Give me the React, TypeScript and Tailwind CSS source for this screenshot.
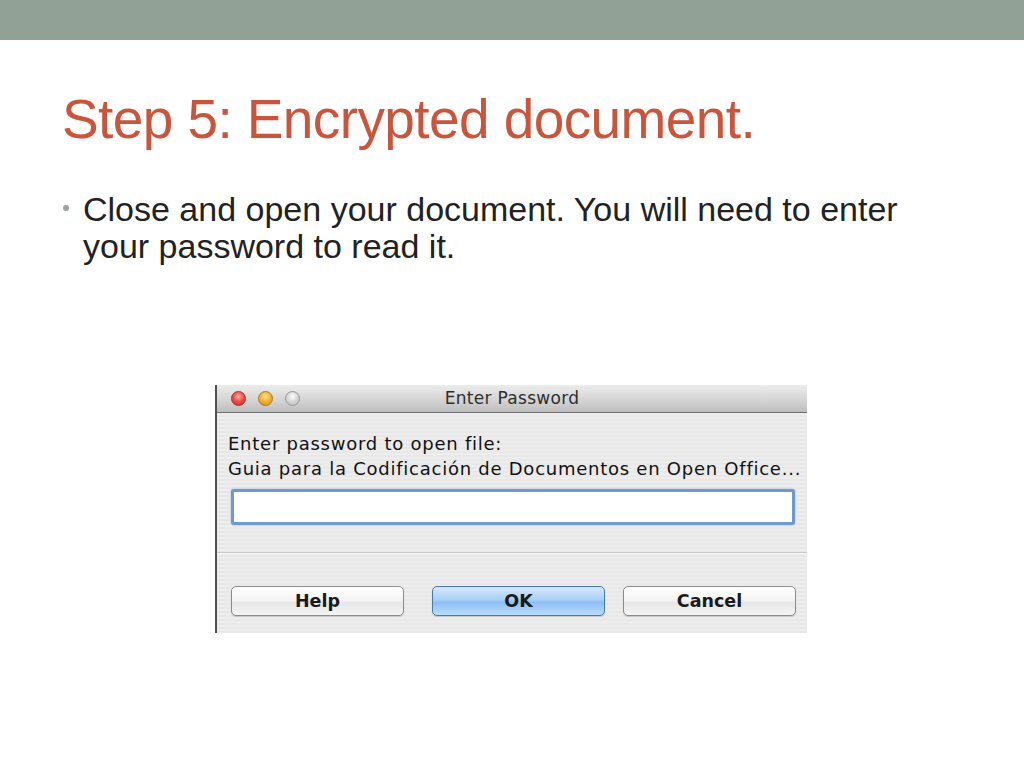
import React from 'react';

const sans = 'font-["Liberation_Sans","Arial",sans-serif]';
const ui = 'font-["DejaVu_Sans","Lucida_Grande",sans-serif]';

// Mac-style window button (close / minimise / zoom)
const Light: React.FC<{ tone: string }> = ({ tone }) => (
  <span className={`block w-[15px] h-[15px] rounded-full border ${tone}`} />
);

const DialogButton: React.FC<{ label: string; primary?: boolean; className?: string }> = ({
  label,
  primary,
  className = ''
}) => (
  <button
    className={`h-[30px] w-[173px] rounded-[5px] border text-[17.5px] font-semibold text-[#1a1a1a] flex items-center justify-center shadow-[0_1px_1px_rgba(0,0,0,0.15)] ${
      primary
        ? 'border-[#4a76b3] bg-[linear-gradient(to_bottom,#d6e9fc_0%,#a9cff7_45%,#8ebff2_55%,#b9dcfc_100%)]'
        : 'border-[#8c8c8c] bg-[linear-gradient(to_bottom,#ffffff_0%,#f3f3f3_50%,#e6e6e6_55%,#f4f4f4_100%)]'
    } ${className}`}
  >
    {label}
  </button>
);

const PasswordDialog: React.FC = () => (
  <div className={`${ui} w-[592px] h-[248px] ml-[215px] border-l-2 border-[#4f4f4f] bg-[#ececec] flex flex-col`}>
    {/* title bar */}
    <div className="relative shrink-0 h-[28px] flex items-center border-b border-[#6f6f6f] bg-[linear-gradient(to_bottom,#ececec,#d2d2d2_60%,#bdbdbd)]">
      <div className="flex items-center gap-[12px] pl-[14px]">
        <Light tone="border-[#a8302c] bg-[radial-gradient(circle_at_50%_35%,#ffb0a8_0%,#f0504a_45%,#c42a24_100%)]" />
        <Light tone="border-[#b27a14] bg-[radial-gradient(circle_at_50%_35%,#ffe2a0_0%,#f4b332_45%,#cf8c10_100%)]" />
        <Light tone="border-[#9a9a9a] bg-[radial-gradient(circle_at_50%_35%,#ffffff_0%,#d8d8d8_45%,#b4b4b4_100%)]" />
      </div>
      <span className="absolute inset-0 flex items-center justify-center text-[17px] tracking-[0.3px] text-[#2e2e2e]">
        Enter Password
      </span>
    </div>

    {/* body */}
    <div className="flex-1 flex flex-col bg-[repeating-linear-gradient(to_bottom,#ededed_0px,#ededed_2px,#e8e8e8_2px,#e8e8e8_4px)]">
      <div className="pl-[11px] pt-[18px] text-[18px] leading-[25px] text-[#111] tracking-[0.75px] whitespace-nowrap">
        <p>Enter password to open file:</p>
        <p>Guia para la Codificación de Documentos en Open Office...</p>
      </div>
      <div className="ml-[14px] mt-[8px] w-[564px] h-[36px] rounded-[3px] border-[3px] border-[#6f98cc] bg-white shadow-[0_0_2px_#8fb3e0]" />
      <div className="mt-[27px] h-[2px] border-t border-[#c9c9c9] bg-white/70" />
      <div className="flex mt-[32px] pl-[14px]">
        <DialogButton label="Help" />
        <DialogButton label="OK" primary className="ml-[28px]" />
        <DialogButton label="Cancel" className="ml-[18px]" />
      </div>
    </div>
  </div>
);

export default function App() {
  return (
    <div className="w-[1024px] h-[768px] bg-white overflow-hidden">
      <div className="h-[40px] bg-[#91a195]" />

      <h1 className={`${sans} pl-[62px] mt-[52px] text-[55px] leading-[55px] text-[#c9553d] tracking-[-0.6px]`}>
        Step 5: Encrypted document.
      </h1>

      <div className={`${sans} mt-[44px] flex text-[34px] leading-[37px] text-[#222]`}>
        <span className="w-[83px] flex justify-end pr-[14px] pt-[14px]">
          <span className="block w-[6px] h-[6px] rounded-full bg-[#9aa59e]" />
        </span>
        <p className="w-[840px]">
          Close and open your document. You will need to enter your password to read it.
        </p>
      </div>

      <div className="mt-[120px]">
        <PasswordDialog />
      </div>
    </div>
  );
}
